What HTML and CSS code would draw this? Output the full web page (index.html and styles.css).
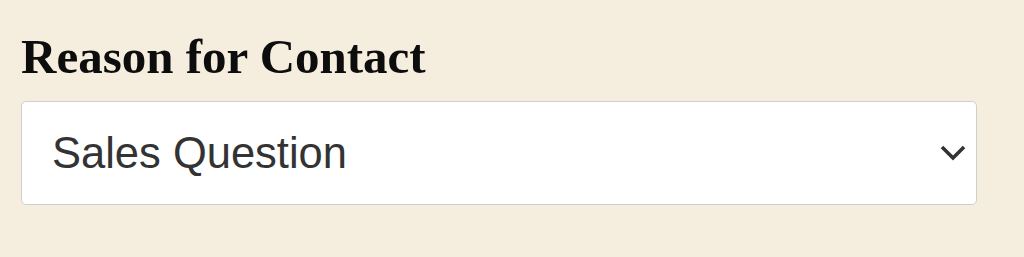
FILE: index.html
```html
<!DOCTYPE html>
<html>
<head>
<meta charset="utf-8">
<link rel="stylesheet" href="styles.css">
</head>
<body>
<div class="field">
  <label class="label" for="reason">Reason for Contact</label>
  <div class="select">
    <span class="value">Sales Question</span>
    <svg class="chev" width="26" height="16" viewBox="0 0 26 16"><path d="M2 2 L13 13 L24 2" fill="none" stroke="#333" stroke-width="3.6" stroke-linecap="butt"/></svg>
  </div>
</div>
</body>
</html>
```
FILE: styles.css
```css
html, body { margin: 0; padding: 0; }
body { background: #f5eedf; width: 1024px; height: 257px; overflow: hidden; }
.field { padding: 28px 0 0 21px; width: 956px; display: flex; flex-direction: column; }
.label { font-family: "Liberation Serif", serif; font-weight: bold; font-size: 49px; line-height: 58px; color: #0d0d0d; margin-bottom: 15px; }
.select { box-sizing: border-box; height: 104px; background: #fff; border: 1.5px solid #cfcfcf; border-radius: 5px; display: flex; align-items: center; justify-content: space-between; padding: 0 10px 0 30px; }
.value { font-family: "Liberation Sans", Arial, sans-serif; font-size: 43.5px; color: #333; }
.chev { display: block; }
```
